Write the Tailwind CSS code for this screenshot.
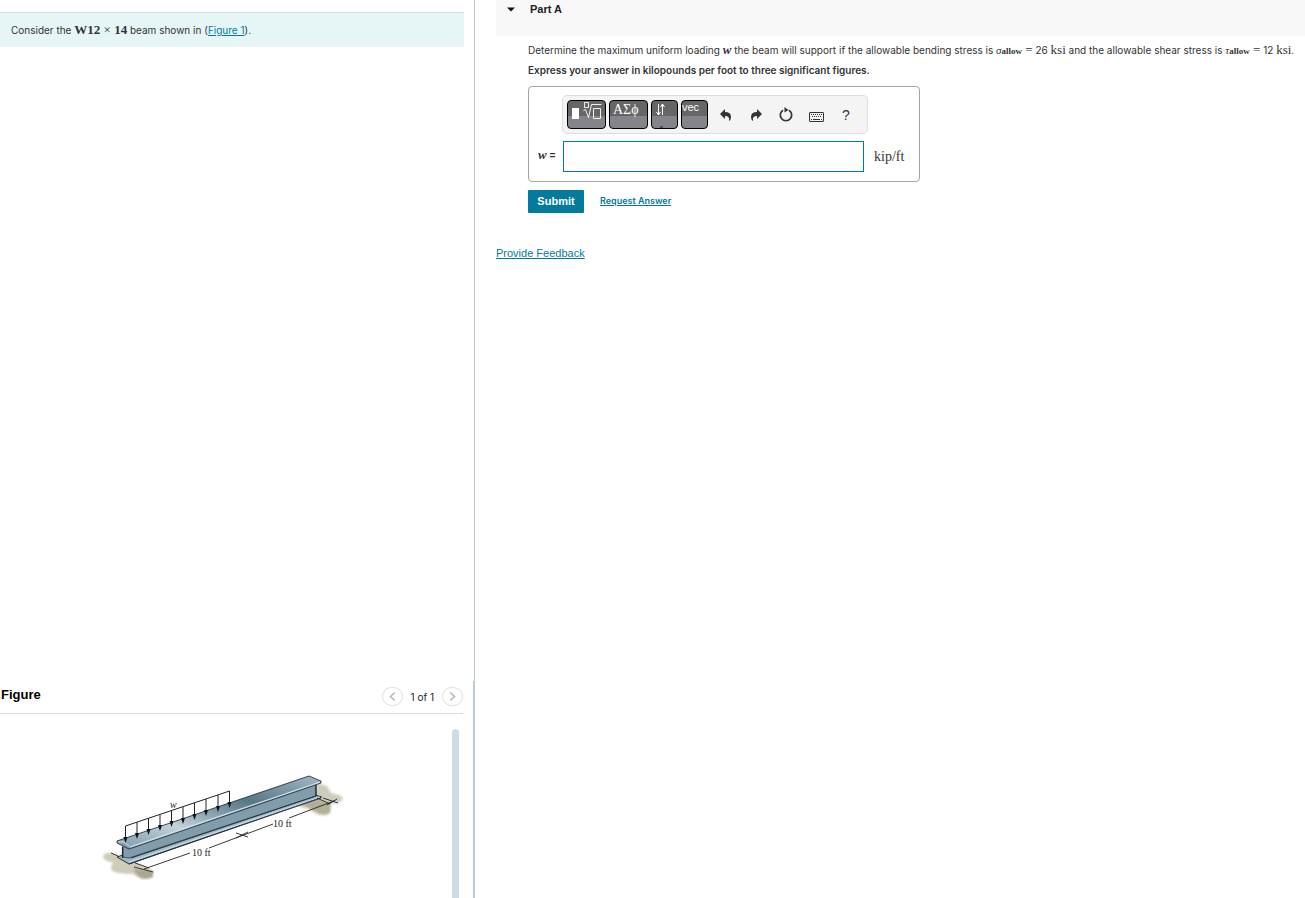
<!DOCTYPE html>
<html lang="en">
<head>
<meta charset="utf-8">
<meta name="viewport" content="width=device-width, initial-scale=1">
<title>Part A</title>
<script src="https://cdn.jsdelivr.net/npm/@tailwindcss/browser@4"></script>
</head>
<body class="flex h-screen overflow-hidden bg-white font-['Liberation_Sans',Arial,sans-serif] text-[10px] text-[#333]">
<aside class="flex w-[475px] shrink-0 flex-col">
  <section class="min-h-0 flex-1 border-r border-[#b7cbdd] pt-3 pr-[10px]">
    <p class="h-[35px] border-t border-[#d5dfdf] bg-[#e6f6f7] pl-[11px] font-['Inter',sans-serif] leading-[33px] whitespace-nowrap">Consider the <span class="font-['Liberation_Serif',serif] text-[13px]"><b>W12</b> × <b>14</b></span> beam shown in (<a href="#figure" class="text-[#047a9c] underline">Figure 1</a>).</p>
  </section>
  <section id="figure" class="h-[217px] shrink-0 border-r-2 border-[#b7cbdd] pr-[10px]">
    <header class="flex h-[33px] items-center justify-between border-b border-[#dcdcdc]">
      <h2 class="pb-1 pl-px text-[13px] font-bold text-black">Figure</h2>
      <nav class="flex items-center gap-2 pb-px" aria-label="Figures">
        <button aria-label="Previous figure" class="flex h-[19px] w-[21px] items-center justify-center rounded-full border border-[#dedede] bg-white"><svg class="h-[9px] w-[7px]" viewBox="0 0 7 9" fill="none" stroke="#bbb" stroke-width="1.6"><path d="M5.7.7 1.500 4.500l4.200 3.800"/></svg></button>
        <span class="pt-px font-['Inter',sans-serif] text-[#222]">1 of 1</span>
        <button aria-label="Next figure" class="flex h-[19px] w-[21px] items-center justify-center rounded-full border border-[#dedede] bg-white"><svg class="h-[9px] w-[7px]" viewBox="0 0 7 9" fill="none" stroke="#bbb" stroke-width="1.6"><path d="m1.300.7 4.200 3.800-4.200 3.800"/></svg></button>
      </nav>
    </header>
    <div class="flex h-[184px] items-stretch justify-between pt-[15px] pr-1">
      <svg class="mt-[41px] ml-[100px] h-[115px] w-[250px] shrink-0" viewBox="100 770 250 115" role="img" aria-label="Beam with uniform load w">
        <defs>
          <linearGradient id="top" x1="0" x2="1" y1="1" y2="0"><stop offset="0" stop-color="#7899a9"/><stop offset=".3" stop-color="#c3d2da"/><stop offset=".5" stop-color="#7f9caa"/><stop offset=".65" stop-color="#567786"/><stop offset="1" stop-color="#a4b9c5"/></linearGradient>
          <filter id="soft"><feGaussianBlur stdDeviation="0.9"/></filter>
        </defs>
        <g fill="#cfccb9" filter="url(#soft)">
          <path d="M103 857q1-5 9-4l14 5 12 5 10 5 5 3-2 6-9 2-9-5q-8 0-14-1-9-1-8-6l2-5q-8 0-10-5Z"/>
          <path d="m297 804 19-7 1-14 10 3 4 7q12 2 12 6-2 4-12 5l-1 9q-6 5-15 0l-8-5q-8 0-10-4Z"/>
        </g>
        <path d="m133 869 20 2v6q-8 4-15-1Z" fill="#aaa78f" filter="url(#soft)"/>
        <path d="m300 803 17-4 13 5v8q-6 4-13 0Z" fill="#b2ae97" filter="url(#soft)"/>
        <path d="m117 857 193-65 6 3 5 2-192 67Z" fill="#9eb7c4" stroke="#26333b" stroke-width="1"/>
        <path d="m123 844 193-62v14l-187 62-6-1Z" fill="#819cab" stroke="#2c3c45" stroke-width=".8"/>
        <path d="m131 858 185-62" stroke="#263740" stroke-width="1"/>
        <path d="m129 862 191-65" stroke="#c9dce5" stroke-width="1.300"/>
        <path d="m129 864 192-66v-2" fill="none" stroke="#26333b"/>
        <path d="m117 841 192-65 12 5v2l-192 66-12-6Z" fill="url(#top)" stroke="#26333b" stroke-width=".9"/>
        <path d="m130 847 190-65" stroke="#d4e4eb" stroke-width="1.300"/>
        <path d="M118 842h6l5 4" fill="none" stroke="#dfebf0" stroke-width=".8"/>
        <path d="M122.500 847v11M316 785v11" stroke="#1d272d" stroke-width="1.200"/>
        <g fill="none" stroke="#222" stroke-width="1"><path d="M125.500 840v-14L229.500 791v14M137 836v-14M148.500 832v-14M160 829v-14M171.500 825v-14M183 821v-14M194.500 817v-14M206 813v-14M218 809v-14"/></g>
        <g fill="#111"><path d="m123.500 837 2 6 2-6ZM135 833l2 6 2-6ZM146.500 829l2 6 2-6ZM158 825l2 6 2-6ZM169.500 821l2 6 2-6ZM181 818l2 6 2-6ZM192.500 814l2 6 2-6ZM204 810l2 6 2-6ZM216 806l2 6 2-6ZM227.500 802l2 6 2-6Z"/></g>
        <g stroke="#222" stroke-width=".9" fill="none"><path d="m144 869 46-16M209 848l64-24M289 818l45-17M135 863l14 5M134 867l19 5M111 853l7 3M236 833l12 4M236 838l12-6M317 798l13 6M323 798l15 5M327 805l10-6"/></g>
        <g font-family="Liberation Serif, serif" fill="#222" font-size="10"><text x="192" y="856">10 ft</text><text x="273" y="827">10 ft</text><text x="170" y="808" font-style="italic">w</text></g>
      </svg>
      <div class="w-[7px] shrink-0 rounded-t bg-[#d0dce5]"></div>
    </div>
  </section>
</aside>
<main class="min-w-0 flex-1 pl-[21px]">
  <header class="flex h-9 items-start bg-[#f8f8f8] pt-[3px] pl-[11px]">
    <button class="flex items-center gap-[15px] text-[11px] leading-[13px] font-bold text-[#222]"><svg class="h-[5px] w-2" viewBox="0 0 8 5" fill="#111"><path d="M0 .5h8L4 4.500Z"/></svg>Part A</button>
  </header>
  <div class="pl-8">
    <div class="pt-1 font-['Inter',sans-serif]">
      <p class="h-5 leading-5 whitespace-nowrap">Determine the maximum uniform loading <b class="font-['Liberation_Serif',serif] text-[13px] italic">w</b> the beam will support if the allowable bending stress is <span class="font-['Liberation_Serif',serif] text-[13px]"><i class="text-[11px]">σ</i><b class="text-[9px]">allow</b> =</span> 26 <span class="font-['Liberation_Serif',serif] text-[13px]">ksi</span> and the allowable shear stress is <span class="font-['Liberation_Serif',serif] text-[13px]"><i class="text-[11px]">τ</i><b class="text-[9px]">allow</b> =</span> 12 <span class="font-['Liberation_Serif',serif] text-[13px]">ksi</span>.</p>
      <p class="h-5 leading-5 font-semibold whitespace-nowrap">Express your answer in kilopounds per foot to three significant figures.</p>
    </div>
    <form>
      <div class="mt-[6px] h-24 w-[392px] rounded border border-[#a5a5a5] pt-2 pl-[9px]">
        <div class="ml-6 flex h-[39px] w-[306px] items-center rounded-[5px] border border-[#dedede] bg-[#f4f4f4] pl-1 text-white">
          <div class="flex gap-[3px] pb-px">
            <button type="button" aria-label="Templates" class="h-[29px] w-[39px] rounded border border-black bg-linear-to-b from-[#666] from-55% to-[#85848b] to-55%"><svg class="h-[27px] w-[37px]" viewBox="0 0 37 27" fill="none" stroke="#fff"><path d="M4 7h7v11H4Z" fill="#fff" stroke="none"/><path d="M16.500 1.500h4v5h-4ZM15.500 9.500l2-1 3 8L23.500 3.500h10M25.500 7.500h7v10h-7Z" stroke-width=".9"/></svg></button>
            <button type="button" class="flex h-[29px] w-[39px] rounded border border-black bg-linear-to-b from-[#666] from-55% to-[#85848b] to-55% pl-[3px] font-['Liberation_Serif',serif] text-[14px] leading-[18px]">ΑΣϕ</button>
            <button type="button" aria-label="Arrows" class="h-[29px] w-[27px] rounded border border-black bg-linear-to-b from-[#666] from-55% to-[#85848b] to-55%"><svg class="h-[27px] w-[25px]" viewBox="0 0 25 27" fill="none" stroke="#fff"><path d="M6.500 3v11M4.500 11l2 3 2-3M10.500 14V3M8.500 6l2-3 2 3"/><path d="M8 26h3" stroke="#222"/></svg></button>
            <button type="button" class="flex h-[29px] w-[27px] rounded border border-black bg-linear-to-b from-[#666] from-55% to-[#85848b] to-55% text-[11px] leading-[13px]">vec</button>
          </div>
          <div class="flex items-center pl-[3px] text-[#333]">
            <button type="button" aria-label="Undo" class="flex w-[30px] justify-center"><svg class="h-3 w-3" viewBox="0 0 12 12" fill="currentColor"><path d="M5 0v3q6 0 6 5 0 3-2 4 1-5-4-5v3L0 5Z"/></svg></button>
            <button type="button" aria-label="Redo" class="flex w-[30px] justify-center"><svg class="h-3 w-3" viewBox="0 0 12 12" fill="currentColor"><path d="M7 0v3Q1 3 1 8q0 3 2 4-1-5 4-5v3l5-5Z"/></svg></button>
            <button type="button" aria-label="Reset" class="flex w-[30px] justify-center"><svg class="h-[15px] w-[14px]" viewBox="0 0 14 15" fill="none" stroke="currentColor" stroke-width="1.700"><path d="M10 3.200A5.700 5.700 0 1 1 4 3.200"/><path d="M5.500 0v5.600L9.500 3Z" fill="currentColor" stroke="none"/></svg></button>
            <button type="button" aria-label="Keyboard" class="flex w-[30px] justify-center pt-1"><svg class="h-[10px] w-[15px]" viewBox="0 0 15 10" fill="none" stroke="currentColor"><rect x=".5" y=".5" width="14" height="9" rx=".5"/><path d="M2 2.500h11M3 4.500h10" stroke-dasharray="1 1"/><path d="M2 7.500h1M4 7.500h7M12 7.500h1"/></svg></button>
            <button type="button" aria-label="Help" class="w-[30px] pt-px text-[14px]">?</button>
          </div>
        </div>
        <div class="mt-[7px] flex items-center">
          <label for="answer" class="w-[25px] pb-1 font-bold whitespace-nowrap"><i class="font-['Liberation_Serif',serif] text-[13px]">w</i> =</label>
          <input id="answer" type="text" class="h-[31px] w-[301px] border border-[#047a9c] bg-white px-2 text-[13px] outline-none">
          <span class="pb-px pl-[10px] font-['Liberation_Serif',serif] text-[14px]">kip/ft</span>
        </div>
      </div>
      <div class="mt-2 flex h-[23px] items-center gap-4">
        <button type="button" class="h-[23px] w-14 rounded-[1px] bg-[#047a9c] text-[11px] font-bold text-white">Submit</button>
        <a href="#" class="pb-[2px] font-['Inter',sans-serif] text-[9px] font-semibold text-[#047a9c] underline">Request Answer</a>
      </div>
    </form>
  </div>
  <a href="#" class="mt-8 inline-block text-[11px] leading-4 text-[#047a9c] underline">Provide Feedback</a>
</main>
</body>
</html>
